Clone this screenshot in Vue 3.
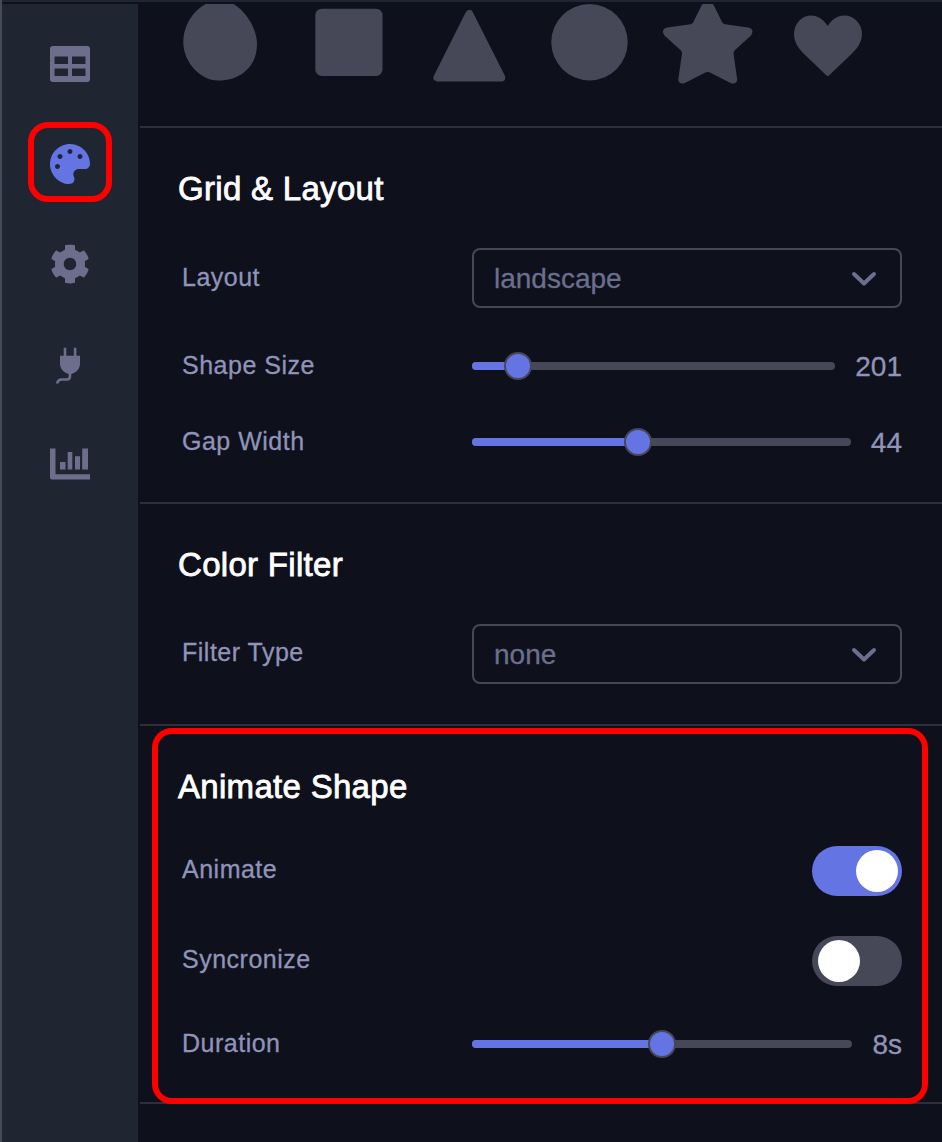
<script setup>
import { ref } from 'vue'

const activeTab = ref('style')
const tabs = ['data', 'style', 'settings', 'plugins', 'stats']

const layout = ref('landscape')
const filterType = ref('none')
const animate = ref(true)
const syncronize = ref(false)

// percent is the position of the thumb on the track
const shapeSize = ref({ value: '201', percent: 12.6 })
const gapWidth = ref({ value: '44', percent: 43.9 })
const duration = ref({ value: '8s', percent: 49.9 })
</script>

<template>
  <div class="app">
    <div class="top-bar"></div>
    <div class="body">
      <nav class="sidebar">
        <button v-for="tab in tabs" :key="tab" class="tab" :class="{ active: activeTab === tab }" @click="activeTab = tab">
          <svg v-if="tab === 'data'" viewBox="0 0 40 40">
            <path fill-rule="evenodd" d="M3 2H37Q40 2 40 5V35Q40 38 37 38H3Q0 38 0 35V5Q0 2 3 2ZM4.5 12.5V20H18V12.5ZM22 12.5V20H35.500V12.500ZM4.500 24.500V32H18V24.500ZM22 24.500V32H35.500V24.500Z" />
          </svg>
          <svg v-else-if="tab === 'style'" viewBox="0 0 512 512">
            <path d="M204.3 5C104.9 24.4 24.8 104.3 5.2 203.4c-37 187 131.7 326.4 258.8 306.7 41.2-6.4 61.4-54.6 42.5-91.7-23.1-45.4 9.9-98.4 60.9-98.4h79.7c35.8 0 64.8-29.6 64.9-65.3C511.5 97.1 368.1-26.9 204.3 5zM96 320c-17.7 0-32-14.3-32-32s14.3-32 32-32 32 14.3 32 32-14.3 32-32 32zm32-128c-17.7 0-32-14.3-32-32s14.3-32 32-32 32 14.3 32 32-14.3 32-32 32zm128-64c-17.7 0-32-14.3-32-32s14.3-32 32-32 32 14.3 32 32-14.3 32-32 32zm128 64c-17.7 0-32-14.3-32-32s14.3-32 32-32 32 14.3 32 32-14.3 32-32 32z" />
          </svg>
          <svg v-else-if="tab === 'settings'" viewBox="0 0 512 512">
            <path d="M487.4 315.7l-42.6-24.6c4.3-23.2 4.3-47 0-70.2l42.6-24.6c4.9-2.8 7.1-8.6 5.5-14-11.1-35.6-30-67.8-54.7-94.6-3.8-4.1-10-5.1-14.8-2.3L380.8 110c-17.9-15.4-38.5-27.3-60.8-35.1V25.8c0-5.6-3.9-10.5-9.4-11.7-36.7-8.2-74.3-7.8-109.2 0-5.5 1.2-9.4 6.1-9.4 11.7V75c-22.2 7.9-42.8 19.8-60.8 35.1L88.7 85.5c-4.9-2.8-11-1.9-14.8 2.3-24.7 26.7-43.6 58.9-54.7 94.6-1.7 5.4.6 11.2 5.5 14L67.3 221c-4.3 23.2-4.3 47 0 70.2l-42.6 24.6c-4.9 2.8-7.1 8.6-5.5 14 11.1 35.6 30 67.8 54.7 94.6 3.8 4.1 10 5.1 14.8 2.3l42.6-24.6c17.9 15.4 38.5 27.3 60.8 35.1v49.2c0 5.6 3.9 10.5 9.4 11.7 36.7 8.2 74.3 7.8 109.2 0 5.500-1.200 9.400-6.100 9.400-11.700v-49.200c22.200-7.900 42.800-19.800 60.800-35.100l42.600 24.600c4.900 2.800 11 1.900 14.800-2.300 24.700-26.700 43.600-58.900 54.700-94.600 1.500-5.500-.7-11.300-5.600-14.100zM256 336c-44.100 0-80-35.900-80-80s35.900-80 80-80 80 35.900 80 80-35.900 80-80 80z" />
          </svg>
          <svg v-else-if="tab === 'plugins'" viewBox="0 0 40 40">
            <path d="M13.700 3.700H16.300V11.700H23.800V3.700H26.400V11.700H30V21Q29 28 20 30.500Q11 28 10 21V11.700H13.700Z" />
            <path class="cable" d="M20 29V32Q20 35.500 17 35.500H11Q8 36 7 39.500" />
          </svg>
          <svg v-else viewBox="0 0 40 40">
            <path d="M0 4.500H5.500V30.200H40V35.500H2Q0 35.500 0 33.500ZM10 18H15.500V25.500H10ZM17.700 8H22.300V25.500H17.700ZM25 12.300H30V25.500H25ZM32.200 4.500H38V25.500H32.200Z" />
          </svg>
        </button>
      </nav>

      <main class="panel">
        <section class="section shapes">
          <svg viewBox="0 0 120 122"><path d="M51-4C68-4 87 20 87 40C87 62 71 76.500 48 76.500C30 76.500 13.300 58 13.300 38C13.300 16 31-4 51-4Z" /></svg>
          <svg viewBox="0 0 120 122"><rect x="25.300" y="4.700" width="67.200" height="67.300" rx="6.500" /></svg>
          <svg viewBox="0 0 120 122"><path class="rounded" d="M59.300 10L27.500 73.500H91.300Z" /></svg>
          <svg viewBox="0 0 120 122"><circle cx="59.500" cy="38.200" r="38.200" /></svg>
          <svg viewBox="0 0 120 122"><path d="M51.500 1.500Q57.700-7 63.900 1.500L72 18Q72.700 20 75 20.300L98 23.500Q105 25 101 31.500L84.500 46.500Q83.400 47.500 83.500 49.500L87.200 75.500Q86.500 81 80.500 79L60 68.500Q57.700 67.500 55.400 68.500L35 79Q29 81 28.300 75.500L32 49.500Q32 47.500 31 46.500L14.400 31.500Q10.500 25 17.400 23.500L40.400 20.300Q42.700 20 43.400 18Z" /></svg>
          <svg viewBox="0 0 120 122"><path d="M57.700 72Q56.500 72 55 70L33 49Q24 40 24 30C24 12 46 3 57.700 22C69 3 92 12 92 30Q92 40 82.500 49L60 70.500Q58.500 72 57.700 72Z" /></svg>
        </section>

        <section class="section grid-layout">
          <h2>Grid &amp; Layout</h2>
          <div class="row select-row">
            <label>Layout</label>
            <div class="select">
              <span>{{ layout }}</span>
              <svg viewBox="0 0 26 16"><path d="M3 3L13 12.500L23 3" /></svg>
            </div>
          </div>
          <div class="row slider-row">
            <label>Shape Size</label>
            <div class="control">
              <div class="track">
                <div class="fill" :style="{ width: shapeSize.percent + '%' }"></div>
                <div class="thumb" :style="{ left: shapeSize.percent + '%' }"></div>
              </div>
              <span class="value">{{ shapeSize.value }}</span>
            </div>
          </div>
          <div class="row slider-row">
            <label>Gap Width</label>
            <div class="control">
              <div class="track">
                <div class="fill" :style="{ width: gapWidth.percent + '%' }"></div>
                <div class="thumb" :style="{ left: gapWidth.percent + '%' }"></div>
              </div>
              <span class="value">{{ gapWidth.value }}</span>
            </div>
          </div>
        </section>

        <section class="section">
          <h2>Color Filter</h2>
          <div class="row select-row">
            <label class="raised">Filter Type</label>
            <div class="select">
              <span>{{ filterType }}</span>
              <svg viewBox="0 0 26 16"><path d="M3 3L13 12.500L23 3" /></svg>
            </div>
          </div>
        </section>

        <section class="section animate">
          <h2>Animate Shape</h2>
          <div class="row">
            <label class="raised">Animate</label>
            <button class="toggle" :class="{ on: animate }" @click="animate = !animate"><i></i></button>
          </div>
          <div class="row">
            <label class="raised">Syncronize</label>
            <button class="toggle" :class="{ on: syncronize }" @click="syncronize = !syncronize"><i></i></button>
          </div>
          <div class="row slider-row">
            <label>Duration</label>
            <div class="control">
              <div class="track">
                <div class="fill" :style="{ width: duration.percent + '%' }"></div>
                <div class="thumb" :style="{ left: duration.percent + '%' }"></div>
              </div>
              <span class="value">{{ duration.value }}</span>
            </div>
          </div>
        </section>
      </main>
    </div>
  </div>
</template>

<style>
body {
  margin: 0;
  background: #0e101c;
}
</style>

<style scoped>
*,
*::after {
  box-sizing: border-box;
}

.app {
  height: 1142px;
  overflow: hidden;
  display: flex;
  flex-direction: column;
  border-left: 2px solid #444b58;
  background: #0e101c;
  font-family: "Liberation Sans", Arial, sans-serif;
}

.top-bar {
  height: 4px;
  flex: none;
  background: #0e101c;
  border-top: 2px solid #1f2632;
}

.body {
  flex: 1;
  display: flex;
}

.sidebar {
  width: 136px;
  margin-right: 2px;
  padding-top: 10px;
  background: #1f2632;
}

.tab {
  position: relative;
  display: flex;
  align-items: center;
  justify-content: center;
  width: 100%;
  height: 100px;
  padding: 0;
  border: none;
  background: none;
  cursor: pointer;
}

.tab svg {
  width: 40px;
  height: 40px;
  fill: #6c6e8c;
}

.tab .cable {
  fill: none;
  stroke: #6c6e8c;
  stroke-width: 2.6;
}

.tab.active svg {
  fill: #6574e3;
}

/* red frames */
.tab.active::after,
.animate::after {
  content: "";
  position: absolute;
  border: 6px solid #ff0000;
  border-radius: 20px;
  pointer-events: none;
}

.tab.active::after {
  top: 8px;
  left: 26px;
  width: 84px;
  height: 80px;
}

.animate::after {
  top: 2px;
  left: 12px;
  width: 776px;
  height: 376px;
}

.panel {
  flex: 1;
}

.section {
  position: relative;
  display: flex;
  flex-direction: column;
  gap: 40px;
  padding: 40px 40px 40px 38px;
  border-bottom: 2px solid #2d2f3a;
}

.section.shapes {
  flex-direction: row;
  gap: 0;
  height: 124px;
  padding: 0 30px;
}

.shapes svg {
  width: 120px;
  height: 122px;
  fill: #464858;
}

.shapes .rounded {
  stroke: #464858;
  stroke-width: 8;
  stroke-linejoin: round;
}

.grid-layout {
  height: 376px;
}

h2 {
  margin: 0;
  height: 40px;
  line-height: 42px;
  font-size: 33px;
  font-weight: 400;
  color: #fff;
  letter-spacing: 0.3px;
  -webkit-text-stroke: 0.8px #fff;
}

.row {
  display: flex;
  align-items: center;
  justify-content: space-between;
}

.slider-row {
  height: 36px;
}

label {
  padding-left: 4px;
  padding-bottom: 2px;
  font-size: 25px;
  line-height: 30px;
  letter-spacing: 0.5px;
  color: #8f94b8;
  -webkit-text-stroke: 0.3px #8f94b8;
}

label.raised {
  padding-bottom: 5px;
}

.select {
  width: 430px;
  height: 60px;
  display: flex;
  align-items: center;
  justify-content: space-between;
  padding: 2px 23px 0 20px;
  border: 2px solid #464858;
  border-radius: 8px;
  font-size: 28px;
  color: #6b6f8d;
  -webkit-text-stroke: 0.3px #6b6f8d;
}

.select svg {
  width: 26px;
  height: 16px;
  fill: none;
  stroke: #6b6f8d;
  stroke-width: 4;
  stroke-linecap: round;
  stroke-linejoin: round;
}

.control {
  width: 430px;
  height: 36px;
  display: flex;
  align-items: center;
  gap: 20px;
}

.track {
  position: relative;
  flex: 1;
  height: 8px;
  border-radius: 4px;
  background: #464858;
}

.fill {
  height: 8px;
  border-radius: 4px;
  background: #6574e3;
}

.thumb {
  position: absolute;
  top: -10px;
  width: 28px;
  height: 28px;
  margin-left: -14px;
  border: 2px solid #464858;
  border-radius: 50%;
  background: #6574e3;
}

.value {
  padding-top: 2px;
  font-size: 28px;
  color: #8f94b8;
  -webkit-text-stroke: 0.3px #8f94b8;
}

.toggle {
  width: 90px;
  height: 50px;
  display: flex;
  padding: 4px 4px 4px 6px;
  border: none;
  border-radius: 25px;
  background: #464858;
  cursor: pointer;
}

.toggle i {
  width: 42px;
  height: 42px;
  border-radius: 50%;
  background: #fff;
}

.toggle.on {
  justify-content: flex-end;
  background: #6574e3;
}
</style>
